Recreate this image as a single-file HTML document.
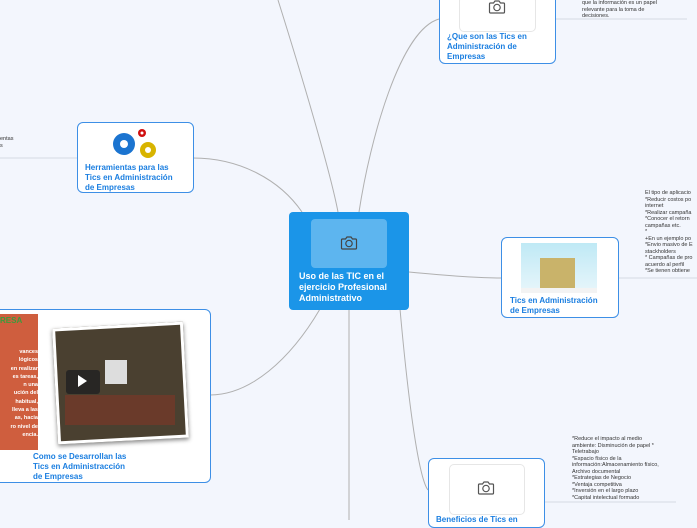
<!DOCTYPE html>
<html><head><meta charset="utf-8"><style>
body{margin:0;width:697px;height:520px;overflow:hidden;background:#f3f6fd;font-family:"Liberation Sans",sans-serif;position:relative}
.n{position:absolute;background:#fff;border:1.5px solid #3d8fe6;border-radius:6px;box-sizing:border-box}
.t{position:absolute;color:#1a7ee0;font-weight:bold;font-size:8px;line-height:10px}
.s{position:absolute;font-size:5.5px;line-height:6.5px;color:#333}
.ph{position:absolute;background:#fff;border:1px solid #e6e6e6;border-radius:5px}
.cam{position:absolute}
</style></head><body>
<svg width="697" height="520" style="position:absolute;left:0;top:0" fill="none" stroke="#b0b0b0" stroke-width="1">
<path d="M278 0 C300 70 330 170 338 212"/>
<path d="M439 19 C400 30 370 140 359 212"/>
<path d="M193 158 C240 158 280 180 302 212"/>
<path d="M409 272 C450 276 480 278 501 278"/>
<path d="M320 309 C290 360 250 395 210 395"/>
<path d="M349 309 L349 520"/>
<path d="M400 309 C410 420 420 480 428 490"/>
<path d="M555 19 L687 19 M618 278 L697 278 M0 158 L77 158 M544 502 L676 502" stroke="#d6d9e2"/>
</svg>
<div class="s" style="left:0;top:136px">entas<br>s</div>
<div class="n" style="left:439px;top:-6px;width:117px;height:70px"></div>
<div class="ph" style="left:459px;top:-4px;width:75px;height:34px"></div>
<svg class="cam" style="left:488px;top:0px" width="18" height="14" viewBox="0 0 18 14" fill="none" stroke="#555" stroke-width="1.2"><path d="M1.5 4 Q1.5 3 2.5 3 L5.5 3 L7 1 L11 1 L12.5 3 L15.5 3 Q16.5 3 16.5 4 L16.5 12 Q16.5 13 15.5 13 L2.5 13 Q1.5 13 1.5 12 Z"/><circle cx="9" cy="7.5" r="3.2"/></svg>
<div class="t" style="left:447px;top:32px">¿Que son las Tics en<br>Administración de<br>Empresas</div>
<div class="s" style="left:582px;top:0">que la información es un papel<br>relevante para la toma de<br>decisiones.</div>
<div class="n" style="left:77px;top:122px;width:117px;height:71px"></div>
<svg style="position:absolute;left:104px;top:128px" width="62" height="32"><circle cx="20" cy="16" r="11" fill="#1b74d0"/><circle cx="20" cy="16" r="4" fill="#fff"/><circle cx="44" cy="22" r="8" fill="#d8b400"/><circle cx="44" cy="22" r="3" fill="#fff"/><circle cx="38" cy="5" r="4" fill="#d01010"/><circle cx="38" cy="5" r="1.5" fill="#fff"/></svg>
<div class="t" style="left:85px;top:163px">Herramientas para las<br>Tics en Administración<br>de Empresas</div>
<div style="position:absolute;left:289px;top:212px;width:120px;height:98px;background:#1b95e8;border-radius:4px"></div>
<div style="position:absolute;left:311px;top:219px;width:76px;height:49px;background:#5db5ef;border-radius:4px"></div>
<svg class="cam" style="left:340px;top:236px" width="18" height="14" viewBox="0 0 18 14" fill="none" stroke="#444" stroke-width="1.2"><path d="M1.5 4 Q1.5 3 2.5 3 L5.5 3 L7 1 L11 1 L12.5 3 L15.5 3 Q16.5 3 16.5 4 L16.5 12 Q16.5 13 15.5 13 L2.5 13 Q1.5 13 1.5 12 Z"/><circle cx="9" cy="7.5" r="3.2"/></svg>
<div style="position:absolute;left:299px;top:271px;color:#fff;font-weight:bold;font-size:9px;line-height:11px">Uso de las TIC en el<br>ejercicio Profesional<br>Administrativo</div>
<div class="n" style="left:501px;top:237px;width:118px;height:81px"></div>
<div style="position:absolute;left:521px;top:243px;width:76px;height:50px;background:linear-gradient(#bfe9f5,#e8f6fb)"></div>
<div style="position:absolute;left:540px;top:258px;width:35px;height:32px;background:#c9b36a"></div>
<div style="position:absolute;left:521px;top:288px;width:76px;height:5px;background:#f3f3f3"></div>
<div class="t" style="left:510px;top:296px">Tics en Administración<br>de Empresas</div>
<div class="s" style="left:645px;top:190px">El tipo de aplicacio<br>*Reducir costos po<br>internet<br>*Realizar campaña<br>*Conocer el retorn<br>campañas etc.<br>*<br>+En un ejemplo po<br>*Envio masivo de E<br>stackholders<br>* Campañas de pro<br>acuerdo al perfil<br>*Se tienen obtiene</div>
<div class="n" style="left:-6px;top:309px;width:217px;height:174px"></div>
<div style="position:absolute;left:0;top:314px;width:38px;height:136px;background:#cf5e3e"></div>
<div style="position:absolute;left:0;top:316px;font-size:8px;color:#3c9b3c;font-weight:bold">RESA</div>
<div style="position:absolute;left:0;top:348px;font-size:5.5px;line-height:8.3px;color:#fff;font-weight:bold;width:38px;text-align:right">vances<br>lógicos<br>en realizar<br>es tareas,<br>n una<br>ución del<br>habitual,<br>lleva a las<br>as, hacia<br>ro nivel de<br>encia.</div>
<div style="position:absolute;left:55px;top:325px;width:125px;height:110px;background:#4a4030;transform:rotate(-3deg);box-shadow:0 2px 4px #888;border:3px solid #fff"></div>
<div style="position:absolute;left:105px;top:360px;width:22px;height:24px;background:#ddd"></div>
<div style="position:absolute;left:65px;top:395px;width:110px;height:30px;background:#6a3a2a"></div>
<div style="position:absolute;left:66px;top:370px;width:34px;height:24px;background:#222;opacity:.85;border-radius:3px"></div>
<div style="position:absolute;left:78px;top:375px;width:0;height:0;border-left:9px solid #fff;border-top:6px solid transparent;border-bottom:6px solid transparent"></div>
<div class="t" style="left:33px;top:452px">Como se Desarrollan las<br>Tics en Administracción<br>de Empresas</div>
<div class="n" style="left:428px;top:458px;width:117px;height:70px"></div>
<div class="ph" style="left:449px;top:464px;width:74px;height:49px"></div>
<svg class="cam" style="left:477px;top:481px" width="18" height="14" viewBox="0 0 18 14" fill="none" stroke="#555" stroke-width="1.2"><path d="M1.5 4 Q1.5 3 2.5 3 L5.5 3 L7 1 L11 1 L12.5 3 L15.5 3 Q16.5 3 16.5 4 L16.5 12 Q16.5 13 15.5 13 L2.5 13 Q1.5 13 1.5 12 Z"/><circle cx="9" cy="7.5" r="3.2"/></svg>
<div class="t" style="left:436px;top:515px">Beneficios de Tics en</div>
<div class="s" style="left:572px;top:436px">*Reduce el impacto al medio<br>ambiente: Disminución de papel *<br>Teletrabajo<br>*Espacio físico de la<br>información:Almacenamiento físico,<br>Archivo documental<br>*Estrategias de Negocio<br>*Ventaja competitiva<br>*Inversión en el largo plazo<br>*Capital intelectual formado</div>
</body></html>
